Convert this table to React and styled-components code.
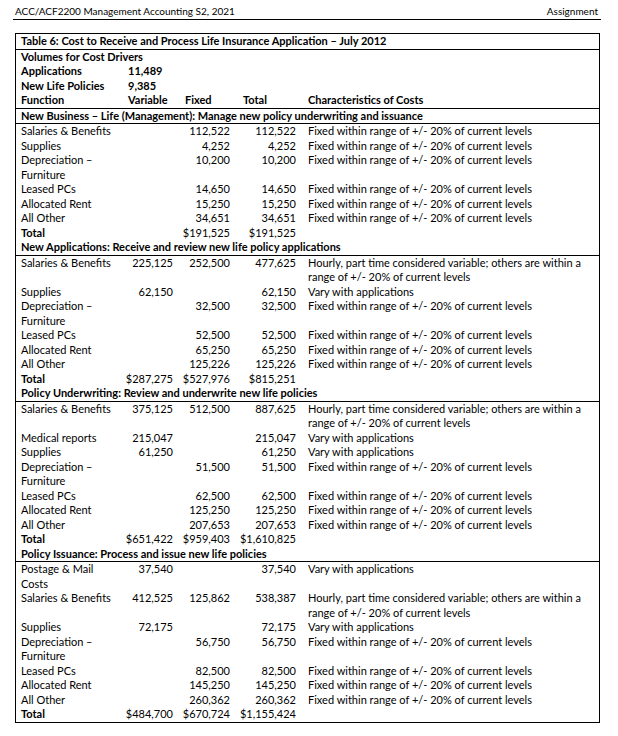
import React from 'react';
import styled, { createGlobalStyle } from 'styled-components';

const GlobalStyle = createGlobalStyle`
    body {
        margin: 0;
        background: #ffffff;
        font-family: Lato, "Liberation Sans", sans-serif;
        color: #000000;
    }
`;

//#region styles
const Page = styled.div`
    width: 618px;
    padding: 4px 0 0 13px;
    box-sizing: border-box;
`;

const DocHeader = styled.div`
    display: flex;
    justify-content: space-between;
    align-items: flex-end;
    width: 588px;
    box-sizing: border-box;
    padding: 0 3px 1px 2px;
    border-bottom: 1px solid #000;
    font-size: 10px;
    line-height: 14px;
`;

const Sheet = styled.div`
    margin: 13px 0 0 2px;
    width: 585px;
    box-sizing: border-box;
    border: 1px solid #000;
    font-size: 11px;
    line-height: 14.5px;
`;

const Title = styled.div`
    padding-left: 5px;
    font-weight: 700;
    border-bottom: 1px solid #000;
`;

const Row = styled.div`
    display: grid;
    grid-template-columns: 100px 52px 57px 66px 1fr;
    padding: 0 4px 0 5px;
    font-weight: ${(p) => (p.$bold ? 700 : 400)};
`;

const Label = styled.div`
    font-weight: ${(p) => (p.$bold ? 700 : 'inherit')};
`;

const Num = styled.div`
    text-align: right;
    white-space: nowrap;
`;

const HeadCell = styled.div`
    padding-left: ${(p) => p.$indent || 0}px;
    white-space: nowrap;
`;

const Note = styled.div`
    padding-left: 12px;
`;

const SectionHead = styled.div`
    padding-left: 5px;
    font-weight: 700;
    border-top: ${(p) => (p.$top ? '1px solid #000' : 'none')};
    border-bottom: 1px solid #000;
`;
//#endregion

const FIXED = 'Fixed within range of +/- 20% of current levels';
const HOURLY = 'Hourly, part time considered variable; others are within a range of +/- 20% of current levels';
const VARY = 'Vary with applications';

const sections = [
    {
        title: 'New Business – Life (Management): Manage new policy underwriting and issuance',
        top: true,
        rows: [
            ['Salaries & Benefits', '', '112,522', '112,522', FIXED],
            ['Supplies', '', '4,252', '4,252', FIXED],
            ['Depreciation – Furniture', '', '10,200', '10,200', FIXED],
            ['Leased PCs', '', '14,650', '14,650', FIXED],
            ['Allocated Rent', '', '15,250', '15,250', FIXED],
            ['All Other', '', '34,651', '34,651', FIXED],
        ],
        total: ['', '$191,525', '$191,525'],
    },
    {
        title: 'New Applications: Receive and review new life policy applications',
        rows: [
            ['Salaries & Benefits', '225,125', '252,500', '477,625', HOURLY],
            ['Supplies', '62,150', '', '62,150', VARY],
            ['Depreciation – Furniture', '', '32,500', '32,500', FIXED],
            ['Leased PCs', '', '52,500', '52,500', FIXED],
            ['Allocated Rent', '', '65,250', '65,250', FIXED],
            ['All Other', '', '125,226', '125,226', FIXED],
        ],
        total: ['$287,275', '$527,976', '$815,251'],
    },
    {
        title: 'Policy Underwriting: Review and underwrite new life policies',
        rows: [
            ['Salaries & Benefits', '375,125', '512,500', '887,625', HOURLY],
            ['Medical reports', '215,047', '', '215,047', VARY],
            ['Supplies', '61,250', '', '61,250', VARY],
            ['Depreciation – Furniture', '', '51,500', '51,500', FIXED],
            ['Leased PCs', '', '62,500', '62,500', FIXED],
            ['Allocated Rent', '', '125,250', '125,250', FIXED],
            ['All Other', '', '207,653', '207,653', FIXED],
        ],
        total: ['$651,422', '$959,403', '$1,610,825'],
    },
    {
        title: 'Policy Issuance: Process and issue new life policies',
        rows: [
            ['Postage & Mail Costs', '37,540', '', '37,540', VARY],
            ['Salaries & Benefits', '412,525', '125,862', '538,387', HOURLY],
            ['Supplies', '72,175', '', '72,175', VARY],
            ['Depreciation – Furniture', '', '56,750', '56,750', FIXED],
            ['Leased PCs', '', '82,500', '82,500', FIXED],
            ['Allocated Rent', '', '145,250', '145,250', FIXED],
            ['All Other', '', '260,362', '260,362', FIXED],
        ],
        total: ['$484,700', '$670,724', '$1,155,424'],
    },
];

const volumes = [
    ['Volumes for Cost Drivers', ''],
    ['Applications', '11,489'],
    ['New Life Policies', '9,385'],
];

export default function App() {
    return (
        <Page>
            <GlobalStyle />
            <DocHeader>
                <span>ACC/ACF2200 Management Accounting S2, 2021</span>
                <span>Assignment</span>
            </DocHeader>
            <Sheet>
                <Title>Table 6: Cost to Receive and Process Life Insurance Application – July 2012</Title>
                {volumes.map(([name, value]) => (
                    <Row key={name} $bold>
                        <HeadCell>{name}</HeadCell>
                        <HeadCell $indent={7}>{value}</HeadCell>
                    </Row>
                ))}
                <Row $bold>
                    <HeadCell>Function</HeadCell>
                    <HeadCell $indent={7}>Variable</HeadCell>
                    <HeadCell $indent={12}>Fixed</HeadCell>
                    <HeadCell $indent={13}>Total</HeadCell>
                    <Note>Characteristics of Costs</Note>
                </Row>
                {sections.map((s) => (
                    <React.Fragment key={s.title}>
                        <SectionHead $top={s.top}>{s.title}</SectionHead>
                        {s.rows.map(([label, variable, fixed, total, note]) => (
                            <Row key={label}>
                                <Label>{label}</Label>
                                <Num>{variable}</Num>
                                <Num>{fixed}</Num>
                                <Num>{total}</Num>
                                <Note>{note}</Note>
                            </Row>
                        ))}
                        <Row>
                            <Label $bold>Total</Label>
                            <Num>{s.total[0]}</Num>
                            <Num>{s.total[1]}</Num>
                            <Num>{s.total[2]}</Num>
                            <Note />
                        </Row>
                    </React.Fragment>
                ))}
            </Sheet>
        </Page>
    );
}
